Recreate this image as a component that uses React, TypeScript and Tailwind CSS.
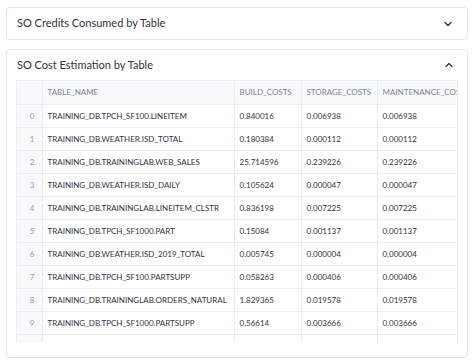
import { ChevronDown, ChevronUp } from "lucide-react"

const rows = [
  ["TRAINING_DB.TPCH_SF100.LINEITEM", "0.840016", "0.006938", "0.006938"],
  ["TRAINING_DB.WEATHER.ISD_TOTAL", "0.180384", "0.000112", "0.000112"],
  ["TRAINING_DB.TRAININGLAB.WEB_SALES", "25.714596", "0.239226", "0.239226"],
  ["TRAINING_DB.WEATHER.ISD_DAILY", "0.105624", "0.000047", "0.000047"],
  ["TRAINING_DB.TRAININGLAB.LINEITEM_CLSTR", "0.836198", "0.007225", "0.007225"],
  ["TRAINING_DB.TPCH_SF1000.PART", "0.15084", "0.001137", "0.001137"],
  ["TRAINING_DB.WEATHER.ISD_2019_TOTAL", "0.005745", "0.000004", "0.000004"],
  ["TRAINING_DB.TPCH_SF100.PARTSUPP", "0.058263", "0.000406", "0.000406"],
  ["TRAINING_DB.TRAININGLAB.ORDERS_NATURAL", "1.829365", "0.019578", "0.019578"],
  ["TRAINING_DB.TPCH_SF1000.PARTSUPP", "0.56614", "0.003666", "0.003666"],
]

const cols = ["TABLE_NAME", "BUILD_COSTS", "STORAGE_COSTS", "MAINTENANCE_COSTS"]

export default function App() {
  return (
    <div className="h-[362px] w-[474px] overflow-hidden bg-white px-[6px] pt-[7px] font-['Lato',sans-serif] text-[#31333f]">
      <div className="flex h-[33px] items-center justify-between rounded-[4px] border border-[#e4e5e8] pl-[10px] pr-[13px] text-[11px]">
        <span>SO Credits Consumed by Table</span>
        <ChevronDown className="size-3 text-[#31333f]" strokeWidth={2.5} />
      </div>
      <div className="mt-[9px] h-[309px] rounded-[4px] border border-[#e4e5e8] px-[9px] pt-[8px]">
        <div className="flex h-[14px] items-center justify-between pl-[1px] pr-[3px] text-[11px]">
          <span>SO Cost Estimation by Table</span>
          <ChevronUp className="size-3 text-[#31333f]" strokeWidth={2.5} />
        </div>
        <div className="mt-[8px] h-[262px] w-[442px] overflow-hidden border-l border-r border-t border-[#ebecef]">
          <table className="w-[470px] table-fixed border-collapse text-[8px]">
            <colgroup>
              <col className="w-[25px]" />
              <col className="w-[192px]" />
              <col className="w-[67px]" />
              <col className="w-[76px]" />
              <col className="w-[110px]" />
            </colgroup>
            <thead>
              <tr className="h-[23px] bg-[#f8f9fb] text-[#808495]">
                <th className="border-b border-r border-[#ebecef]" />
                {cols.map((c) => (
                  <th
                    key={c}
                    className="overflow-hidden whitespace-nowrap border-b border-r border-[#ebecef] px-[5px] text-left font-normal"
                  >
                    {c}
                  </th>
                ))}
              </tr>
            </thead>
            <tbody>
              {rows.map((r, i) => (
                <tr key={i} className="h-[23px]">
                  <td className="border-b border-r border-[#ebecef] bg-[#f8f9fb] pr-[7px] text-right text-[#9a9ca8]">
                    {i}
                  </td>
                  {r.map((v, j) => (
                    <td
                      key={j}
                      className="overflow-hidden whitespace-nowrap border-b border-r border-[#ebecef] px-[5px]"
                    >
                      {v}
                    </td>
                  ))}
                </tr>
              ))}
              <tr className="h-[23px]">
                <td className="border-r border-[#ebecef] bg-[#f8f9fb]" />
                <td className="border-r border-[#ebecef]" />
                <td className="border-r border-[#ebecef]" />
                <td className="border-r border-[#ebecef]" />
                <td className="border-r border-[#ebecef]" />
              </tr>
            </tbody>
          </table>
        </div>
      </div>
    </div>
  )
}
